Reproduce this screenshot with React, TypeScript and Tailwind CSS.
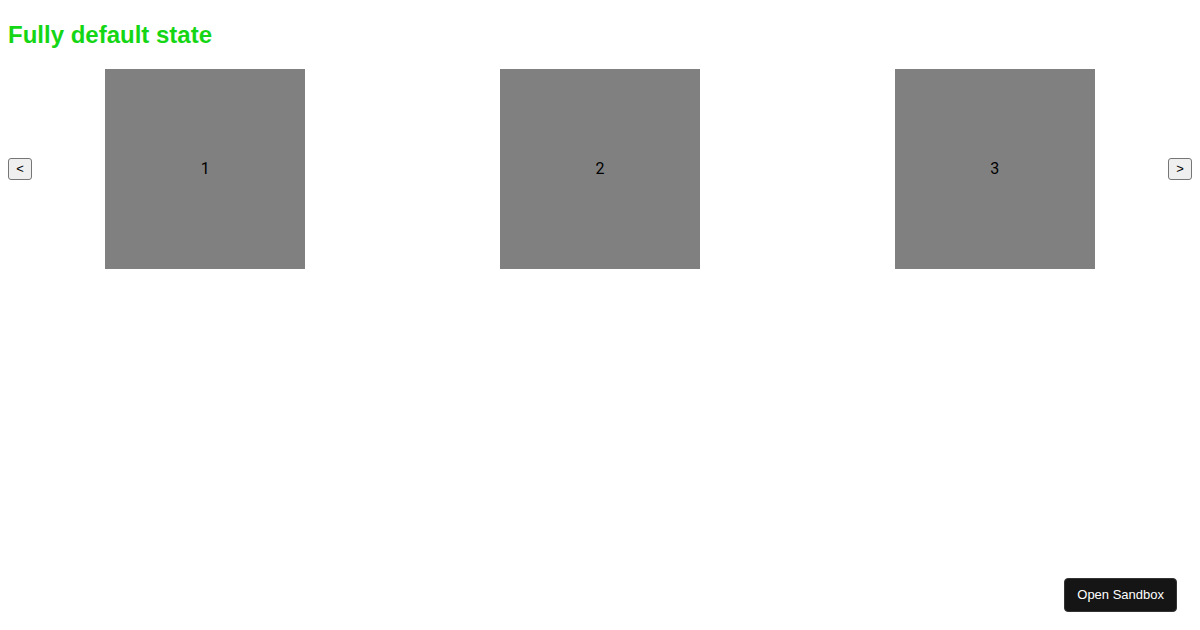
import { useState } from "react";
import type { ReactNode } from "react";

const SLIDES = [1, 2, 3, 4, 5, 6];
const VISIBLE = 3;

function ArrowButton({
	label,
	onClick,
	children,
}: {
	label: string;
	onClick: () => void;
	children: ReactNode;
}) {
	return (
		<button
			type="button"
			aria-label={label}
			onClick={onClick}
			className="relative z-10 h-[22px] w-6 shrink-0 rounded-[3px] border border-[#767676] bg-[#efefef] text-center text-[13px] leading-5 text-black"
		>
			{children}
		</button>
	);
}

function Carousel() {
	const [start, setStart] = useState(0);

	const move = (step: number) =>
		setStart((current) => (current + step + SLIDES.length) % SLIDES.length);

	const visible = Array.from(
		{ length: VISIBLE },
		(_, i) => SLIDES[(start + i) % SLIDES.length],
	);

	return (
		<div className="flex items-center">
			<ArrowButton label="Previous" onClick={() => move(-1)}>
				&lt;
			</ArrowButton>
			{/* the track runs underneath both arrows */}
			<div className="-mx-6 grid flex-1 grid-cols-3 justify-items-center">
				{visible.map((slide) => (
					<div
						key={slide}
						className="flex size-[200px] items-center justify-center bg-[#808080] font-[Roboto,sans-serif] text-base text-black"
					>
						{slide}
					</div>
				))}
			</div>
			<ArrowButton label="Next" onClick={() => move(1)}>
				&gt;
			</ArrowButton>
		</div>
	);
}

export default function App() {
	return (
		<main className="px-2 pt-5 font-['Liberation_Sans',Arial,sans-serif]">
			<h2 className="mb-5 text-2xl leading-[29px] font-bold text-[#15d615]">
				Fully default state
			</h2>
			<Carousel />
			<a
				href="#sandbox"
				className="fixed right-[23px] bottom-[18px] flex h-[34px] items-center rounded-[4px] border border-[#343434] bg-[#151515] px-3 text-[13px] text-white"
			>
				Open Sandbox
			</a>
		</main>
	);
}
